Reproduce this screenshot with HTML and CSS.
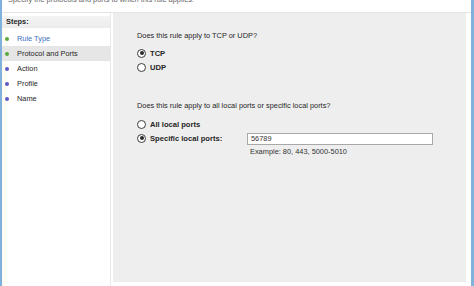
FILE: index.html
```html
<!DOCTYPE html>
<html lang="en-us">
  <head>
    <meta charset="utf-8">
    <meta name="viewport" content="width=device-width">
    <title>New Inbound Rule Wizard</title>
    <link rel="stylesheet" href="styles.css">
  </head>
  <body>
    <div class="window">
      <div class="header">
        <span class="subtitle">Specify the protocols and ports to which this rule applies.</span>
      </div>
      <div class="main">
        <div class="steps">
          <div class="steps-title">Steps:</div>
          <ul class="step-list">
            <li class="step done current-link"><span class="dot"></span>Rule Type</li>
            <li class="step done selected"><span class="dot"></span>Protocol and Ports</li>
            <li class="step"><span class="dot"></span>Action</li>
            <li class="step"><span class="dot"></span>Profile</li>
            <li class="step"><span class="dot"></span>Name</li>
          </ul>
        </div>
        <div class="content">
          <p class="question">Does this rule apply to TCP or UDP?</p>
          <div class="group">
            <label class="radio"><span class="circle checked"></span>TCP</label>
            <label class="radio"><span class="circle"></span>UDP</label>
          </div>

          <p class="question second">Does this rule apply to all local ports or specific local ports?</p>
          <div class="group ports">
            <label class="radio"><span class="circle"></span>All local ports</label>
            <div class="port-row">
              <label class="radio wide"><span class="circle checked"></span>Specific local ports:</label>
              <div class="textbox">56789</div>
            </div>
            <div class="example">Example: 80, 443, 5000-5010</div>
          </div>
        </div>
      </div>
    </div>
  </body>
</html>
```

FILE: styles.css
```css
html, body {
    margin: 0;
    padding: 0;
}
body {
    width: 474px;
    height: 286px;
    overflow: hidden;
    font-family: "Liberation Sans", Arial, sans-serif;
    font-size: 7.4px;
    color: #262626;
    background: #fff;
}
.window {
    box-sizing: border-box;
    display: flex;
    flex-direction: column;
    height: 286px;
    border-left: 2px solid #7fb1dd;
    border-right: 3px solid #7fb1dd;
    background: #fff;
}
.header {
    height: 12px;
    border-bottom: 1px solid #e4e4e4;
    overflow: hidden;
}
.subtitle {
    display: block;
    margin-top: -5px;
    padding-left: 6px;
    line-height: 10px;
    color: #666;
}
.main {
    flex: 1;
    display: flex;
}
.steps {
    width: 108px;
    border-right: 1px solid #e8e8e8;
    margin-right: 2px;
    background: linear-gradient(90deg, #fffbf2, #fff 8px);
}
.steps-title {
    margin-top: 3px;
    height: 12px;
    line-height: 12px;
    padding-left: 4px;
    font-weight: bold;
    background: linear-gradient(180deg, #f4f4f4, #ececec);
}
.step-list {
    list-style: none;
    margin: 3px 0 0;
    padding: 0;
}
.step {
    display: flex;
    align-items: center;
    height: 15px;
    padding-left: 3px;
}
.step .dot {
    width: 4px;
    height: 4px;
    margin-right: 8px;
    border-radius: 50%;
    background: #5c5cc6;
}
.step.done .dot {
    background: #5aa83c;
}
.step.current-link {
    color: #3a70c2;
}
.step.selected {
    background: #e6e6e6;
}
.content {
    flex: 1;
    margin: 0 5px 4px 0;
    padding: 18px 0 0 24px;
    background: #eeeeee;
}
.question {
    margin: 0;
    line-height: 10px;
}
.question.second {
    margin-top: 27px;
}
.group {
    margin-top: 5px;
}
.group.ports {
    margin-top: 6px;
}
.radio {
    display: flex;
    align-items: center;
    height: 14px;
    font-weight: bold;
    font-size: 7.6px;
}
.radio.wide {
    width: 110px;
    flex: none;
}
.circle {
    box-sizing: border-box;
    width: 9px;
    height: 9px;
    margin-right: 4px;
    border: 1px solid #3c3c3c;
    border-radius: 50%;
    background: #fff;
    display: flex;
    align-items: center;
    justify-content: center;
}
.circle.checked::after {
    content: "";
    width: 4px;
    height: 4px;
    border-radius: 50%;
    background: #2a2a2a;
}
.port-row {
    display: flex;
    align-items: center;
}
.textbox {
    box-sizing: border-box;
    width: 186px;
    height: 12px;
    margin-top: 2px;
    padding-left: 3px;
    line-height: 10px;
    border: 1px solid #a8a8a8;
    background: #fff;
    color: #333;
}
.example {
    margin: 2px 0 0 113px;
    line-height: 10px;
    color: #333;
}
```
